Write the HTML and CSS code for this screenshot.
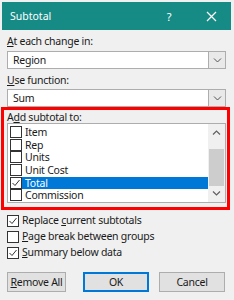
FILE: index.html
```html
<!DOCTYPE html>
<html>
<head>
<meta charset="utf-8">
<link rel="stylesheet" href="styles.css">
</head>
<body>
<div class="dialog">
  <div class="titlebar">
    <span class="title">Subtotal</span>
    <span class="tb-btn help">?</span>
    <span class="tb-btn close"><svg width="11" height="11" viewBox="0 0 11 11"><path d="M1 1L10 10M10 1L1 10" stroke="#fff" stroke-width="1.2" fill="none"/></svg></span>
  </div>
  <div class="content">
    <div class="label first"><u>A</u>t each change in:</div>
    <div class="combo">
      <span class="combo-text">Region</span>
      <span class="combo-btn"><svg width="9" height="5" viewBox="0 0 9 5"><path d="M1 0.5L4.5 4L8 0.5" stroke="#555" stroke-width="1" fill="none"/></svg></span>
    </div>
    <div class="label second"><u>U</u>se function:</div>
    <div class="combo">
      <span class="combo-text">Sum</span>
      <span class="combo-btn"><svg width="9" height="5" viewBox="0 0 9 5"><path d="M1 0.5L4.5 4L8 0.5" stroke="#555" stroke-width="1" fill="none"/></svg></span>
    </div>
    <div class="group">
      <div class="label add">A<u>d</u>d subtotal to:</div>
      <div class="listbox">
        <div class="items">
          <div class="item"><span class="cb"></span><span class="itxt">Item</span></div>
          <div class="item"><span class="cb"></span><span class="itxt">Rep</span></div>
          <div class="item"><span class="cb"></span><span class="itxt">Units</span></div>
          <div class="item"><span class="cb"></span><span class="itxt">Unit Cost</span></div>
          <div class="item sel"><span class="cb"><svg width="10" height="10" viewBox="0 0 10 10"><path d="M1.5 5L4 7.5L8.5 2" stroke="#333" stroke-width="1" fill="none"/></svg></span><span class="itxt">Total</span></div>
          <div class="item"><span class="cb"></span><span class="itxt">Commission</span></div>
        </div>
        <div class="scrollbar">
          <span class="arrow"><svg width="9" height="5" viewBox="0 0 9 5"><path d="M1 4.5L4.5 1L8 4.5" stroke="#606060" stroke-width="1.2" fill="none"/></svg></span>
          <div class="track"><div class="thumb"></div></div>
          <span class="arrow"><svg width="9" height="5" viewBox="0 0 9 5"><path d="M1 0.5L4.5 4L8 0.5" stroke="#606060" stroke-width="1.2" fill="none"/></svg></span>
        </div>
      </div>
      <div class="highlight"></div>
    </div>
    <div class="checks">
      <div class="check"><span class="cb"><svg width="10" height="10" viewBox="0 0 10 10"><path d="M1.5 5L4 7.5L8.5 2" stroke="#333" stroke-width="1" fill="none"/></svg></span><span class="ctxt">Replace <u>c</u>urrent subtotals</span></div>
      <div class="check"><span class="cb"></span><span class="ctxt"><u>P</u>age break between groups</span></div>
      <div class="check"><span class="cb"><svg width="10" height="10" viewBox="0 0 10 10"><path d="M1.5 5L4 7.5L8.5 2" stroke="#333" stroke-width="1" fill="none"/></svg></span><span class="ctxt"><u>S</u>ummary below data</span></div>
    </div>
    <div class="buttons">
      <button class="btn remove"><u>R</u>emove All</button>
      <button class="btn ok">OK</button>
      <button class="btn cancel">Cancel</button>
    </div>
  </div>
</div>
</body>
</html>
```
FILE: styles.css
```css
html, body {
  margin: 0;
  padding: 0;
  background: #f0f0f0;
}
body {
  width: 234px;
  height: 300px;
  overflow: hidden;
  font-family: "Noto Sans", "Open Sans", sans-serif;
  font-size: 10.5px;
  letter-spacing: -0.25px;
  line-height: 13px;
  color: #1a1a1a;
}
.dialog {
  padding: 2px 3px 0 2px;
}
.titlebar {
  height: 28px;
  background: #168b86;
  color: #fff;
  display: flex;
  align-items: center;
}
.title {
  flex: 1;
  padding-left: 8px;
  font-size: 10.5px;
  letter-spacing: 0;
}
.tb-btn {
  width: 40px;
  display: flex;
  justify-content: center;
  align-items: center;
}
.help {
  font-size: 11px;
  margin-right: 2px;
}
.content {
  padding: 0 5px;
}
.label {
  height: 13px;
  line-height: 13px;
}
.label.first {
  margin-top: 5px;
  margin-bottom: 3px;
}
.label.second {
  margin-top: 5px;
  margin-bottom: 2px;
}
.combo {
  height: 16px;
  background: #fff;
  border: 1px solid #adadad;
  display: flex;
}
.combo-text {
  flex: 1;
  padding-left: 5px;
  line-height: 16px;
}
.combo-btn {
  width: 16px;
  border-left: 1px solid #adadad;
  background: #e9e9e9;
  display: flex;
  align-items: center;
  justify-content: center;
}
.group {
  position: relative;
  padding-top: 4px;
}
.label.add {
  height: 12px;
  line-height: 12px;
}
.listbox {
  height: 78px;
  background: #fff;
  border: 1px solid #adadad;
  display: flex;
}
.items {
  flex: 1;
  padding-top: 2px;
}
.item {
  height: 12.6px;
  display: flex;
  align-items: center;
}
.item .cb {
  margin-left: 2px;
}
.cb {
  width: 10px;
  height: 10px;
  border: 1px solid #333;
  background: #fff;
  display: flex;
  align-items: center;
  justify-content: center;
  flex: none;
}
.cb svg {
  display: block;
}
.itxt {
  padding-left: 3px;
  flex: 1;
  height: 12px;
  line-height: 12px;
}
.item.sel .itxt {
  background: #0078d7;
  color: #fff;
}
.scrollbar {
  width: 17px;
  background: #f0f0f0;
  display: flex;
  flex-direction: column;
}
.arrow {
  height: 17px;
  display: flex;
  align-items: center;
  justify-content: center;
}
.track {
  flex: 1;
  padding: 8px 0 0 1px;
}
.thumb {
  width: 15px;
  height: 37px;
  background: #cdcdcd;
}
.highlight {
  position: absolute;
  left: -6px;
  top: 0;
  width: 223px;
  height: 97px;
  border: 3px solid #f00;
}
.checks {
  margin-top: 11px;
  display: flex;
  flex-direction: column;
  gap: 3px;
}
.check {
  height: 13px;
  display: flex;
  align-items: center;
}
.check .cb {
  margin-right: 3px;
}
.ctxt {
  line-height: 13px;
}
.buttons {
  margin-top: 13px;
  display: flex;
}
.btn {
  width: 66px;
  height: 20px;
  font-family: inherit;
  font-size: 10.5px;
  letter-spacing: -0.25px;
  line-height: 16px;
  color: #1a1a1a;
  background: #e1e1e1;
  border: 1px solid #adadad;
  padding: 0;
  margin: 0;
}
.btn.remove {
  width: 59px;
  margin-right: 17px;
}
.btn.ok {
  border: 2px solid #0078d7;
  margin-right: 10px;
}
```
